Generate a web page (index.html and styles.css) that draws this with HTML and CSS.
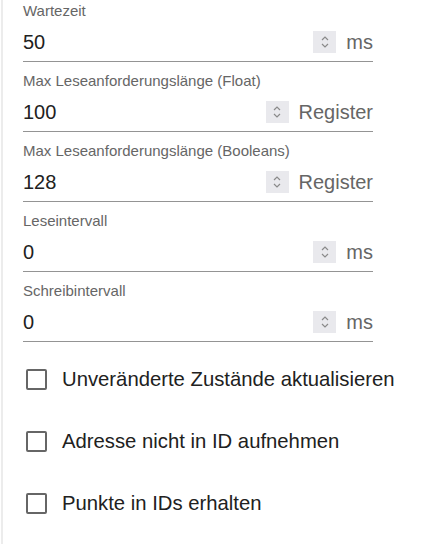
FILE: index.html
```html
<!DOCTYPE html>
<html lang="de">
<head>
    <meta charset="UTF-8">
    <meta name="viewport" content="width=device-width, initial-scale=1.0">
    <title>Einstellungen</title>
    <link rel="stylesheet" href="styles.css">
</head>
<body>

<div class="panel">

    <div class="field">
        <div class="label">Wartezeit</div>
        <div class="input-row">
            <span class="value">50</span>
            <span class="spin"><svg width="12" height="16" viewBox="0 0 12 16"><path d="M3 6 L6 3 L9 6 M3 10 L6 13 L9 10" fill="none" stroke="#8a8a8a" stroke-width="1.2"/></svg></span>
            <span class="unit">ms</span>
        </div>
    </div>

    <div class="field">
        <div class="label">Max Leseanforderungslänge (Float)</div>
        <div class="input-row">
            <span class="value">100</span>
            <span class="spin"><svg width="12" height="16" viewBox="0 0 12 16"><path d="M3 6 L6 3 L9 6 M3 10 L6 13 L9 10" fill="none" stroke="#8a8a8a" stroke-width="1.2"/></svg></span>
            <span class="unit">Register</span>
        </div>
    </div>

    <div class="field">
        <div class="label">Max Leseanforderungslänge (Booleans)</div>
        <div class="input-row">
            <span class="value">128</span>
            <span class="spin"><svg width="12" height="16" viewBox="0 0 12 16"><path d="M3 6 L6 3 L9 6 M3 10 L6 13 L9 10" fill="none" stroke="#8a8a8a" stroke-width="1.2"/></svg></span>
            <span class="unit">Register</span>
        </div>
    </div>

    <div class="field">
        <div class="label">Leseintervall</div>
        <div class="input-row">
            <span class="value">0</span>
            <span class="spin"><svg width="12" height="16" viewBox="0 0 12 16"><path d="M3 6 L6 3 L9 6 M3 10 L6 13 L9 10" fill="none" stroke="#8a8a8a" stroke-width="1.2"/></svg></span>
            <span class="unit">ms</span>
        </div>
    </div>

    <div class="field">
        <div class="label">Schreibintervall</div>
        <div class="input-row">
            <span class="value">0</span>
            <span class="spin"><svg width="12" height="16" viewBox="0 0 12 16"><path d="M3 6 L6 3 L9 6 M3 10 L6 13 L9 10" fill="none" stroke="#8a8a8a" stroke-width="1.2"/></svg></span>
            <span class="unit">ms</span>
        </div>
    </div>

    <div class="checks">
        <label class="check"><span class="box"></span>Unveränderte Zustände aktualisieren</label>
        <label class="check"><span class="box"></span>Adresse nicht in ID aufnehmen</label>
        <label class="check"><span class="box"></span>Punkte in IDs erhalten</label>
    </div>

</div>

</body>
</html>
```

FILE: styles.css
```css
body {
    margin: 0;
    font-family: "Liberation Sans", Arial, sans-serif;
    background-color: white;
}

.panel {
    margin-left: 1px;
    border-left: 2px solid #ececec;
    min-height: 544px;
    padding-left: 20px;
    box-sizing: border-box;
}

.field {
    width: 350px;
    padding-top: 2px;
    margin-bottom: 8px;
}

.label {
    font-size: 15px;
    line-height: 17px;
    color: #666;
    margin-bottom: 4px;
}

.input-row {
    display: flex;
    align-items: center;
    height: 38px;
    border-bottom: 1px solid #949494;
}

.value {
    flex: 1;
    font-size: 20px;
    color: #212121;
}

.spin {
    width: 23px;
    height: 22px;
    background-color: #e9e9ed;
    display: flex;
    align-items: center;
    justify-content: center;
}

.unit {
    margin-left: 10px;
    font-size: 20px;
    color: #666;
}

.checks {
    margin-top: -2px;
}

.check {
    display: flex;
    align-items: center;
    height: 62px;
    font-size: 20.3px;
    color: #212121;
    cursor: pointer;
}

.box {
    width: 17px;
    height: 17px;
    border: 2px solid #666;
    border-radius: 2px;
    margin-left: 3px;
    margin-right: 15px;
}
```
